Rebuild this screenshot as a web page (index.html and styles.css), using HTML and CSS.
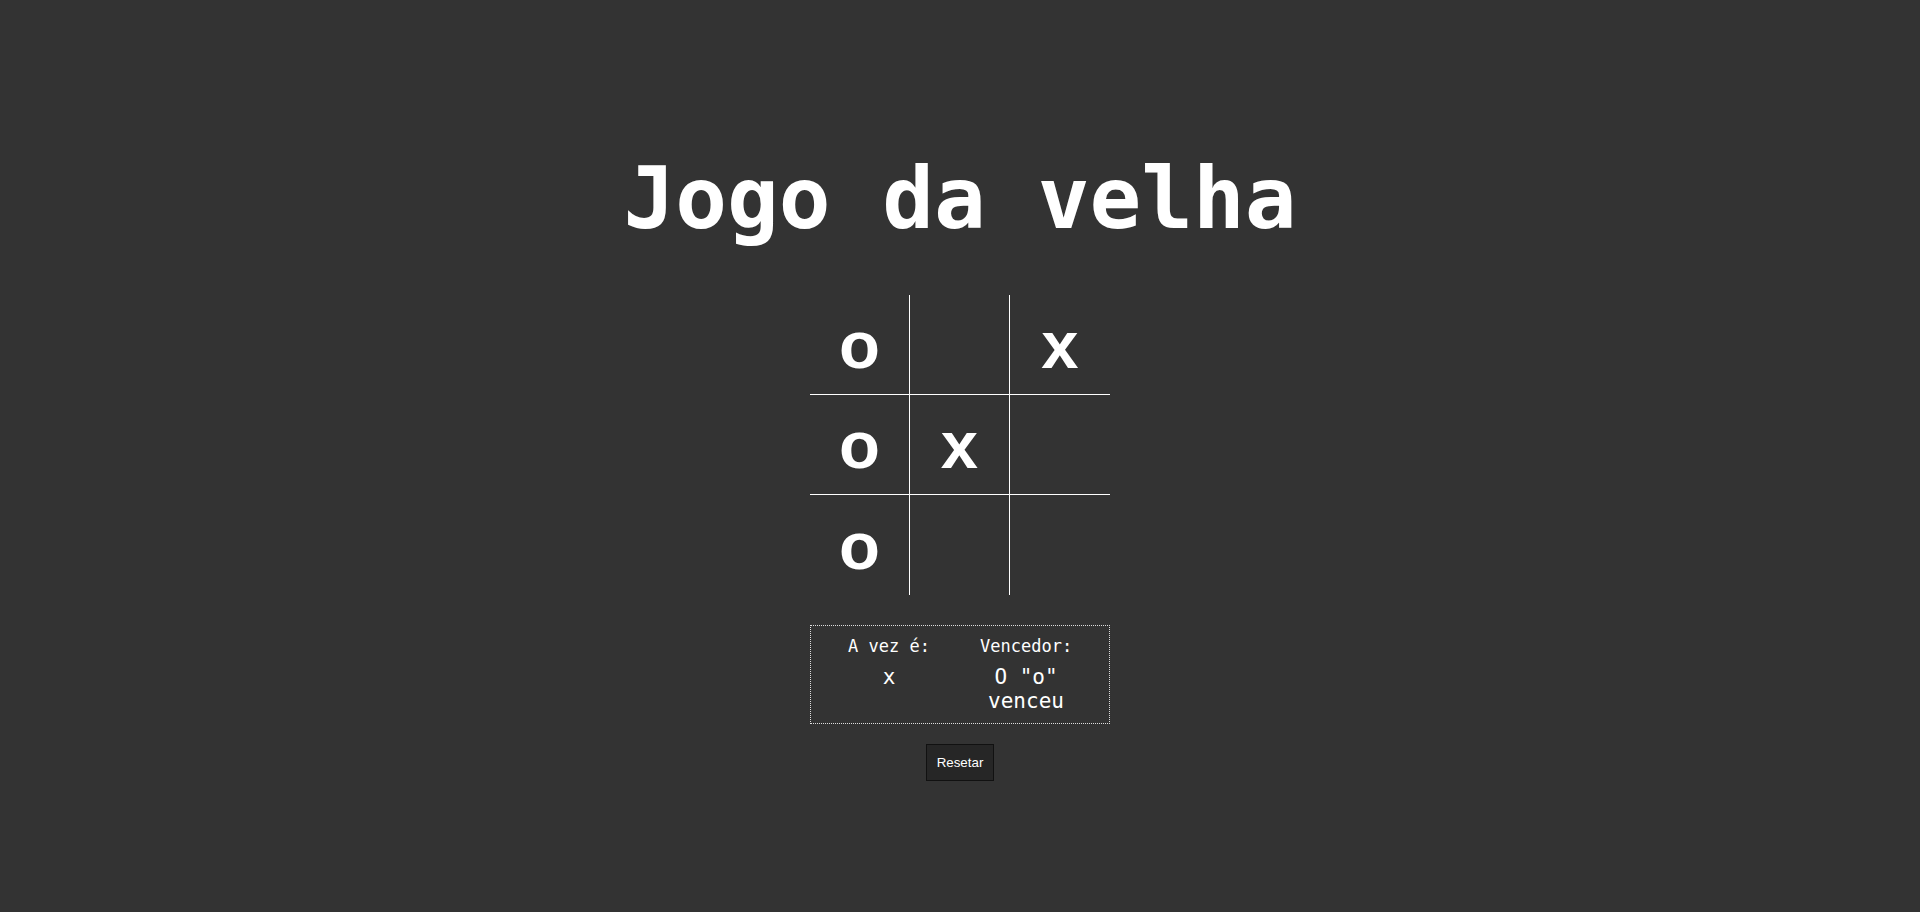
FILE: index.html
```html
<!DOCTYPE html>
<html lang="pt-BR">
<head>
  <meta charset="UTF-8">
  <meta name="viewport" content="width=device-width, initial-scale=1.0">
  <title>Jogo da velha</title>
  <link rel="stylesheet" href="styles.css">
</head>
<body>
  <main class="game">
    <h1>Jogo da velha</h1>

    <div class="board">
      <div class="cell">o</div>
      <div class="cell"></div>
      <div class="cell">x</div>
      <div class="cell">o</div>
      <div class="cell">x</div>
      <div class="cell"></div>
      <div class="cell">o</div>
      <div class="cell"></div>
      <div class="cell"></div>
    </div>

    <div class="status">
      <span class="label">A vez é:</span>
      <span class="label">Vencedor:</span>
      <span class="value" id="turn">x</span>
      <span class="value" id="winner">O "o" venceu</span>
    </div>

    <button class="reset" type="button">Resetar</button>
  </main>
</body>
</html>
```
FILE: styles.css
```css
body {
  margin: 0;
  background-color: #333333;
  color: #ffffff;
  font-family: "DejaVu Sans Mono", monospace;
}
.game {
  display: flex;
  flex-direction: column;
  align-items: center;
  padding-top: 148px;
}
h1 {
  margin: 0 0 47px;
  font-size: 86px;
  font-weight: bold;
  line-height: normal;
}
.board {
  display: grid;
  grid-template-columns: repeat(3, 100px);
  grid-template-rows: repeat(3, 100px);
}
.cell {
  box-sizing: border-box;
  display: flex;
  align-items: center;
  justify-content: center;
  font-family: "Liberation Sans", Arial, sans-serif;
  font-size: 67px;
  font-weight: bold;
}
.cell:nth-child(3n+1),
.cell:nth-child(3n+2) {
  border-right: 1px solid #ffffff;
}
.cell:nth-child(-n+6) {
  border-bottom: 1px solid #ffffff;
}
.status {
  box-sizing: border-box;
  width: 300px;
  margin-top: 30px;
  padding: 10px 0;
  border: 1px dotted #dddddd;
  display: grid;
  grid-template-columns: 82px 92px;
  column-gap: 50px;
  row-gap: 9px;
  justify-content: center;
  text-align: center;
}
.label {
  font-size: 17px;
}
.value {
  font-size: 21px;
  line-height: 24px;
}
.reset {
  margin-top: 20px;
  padding: 10px;
  background-color: #262626;
  color: #ffffff;
  border: 1px solid #111111;
  font-family: "Liberation Sans", Arial, sans-serif;
  font-size: 13.333px;
  cursor: pointer;
}
```
